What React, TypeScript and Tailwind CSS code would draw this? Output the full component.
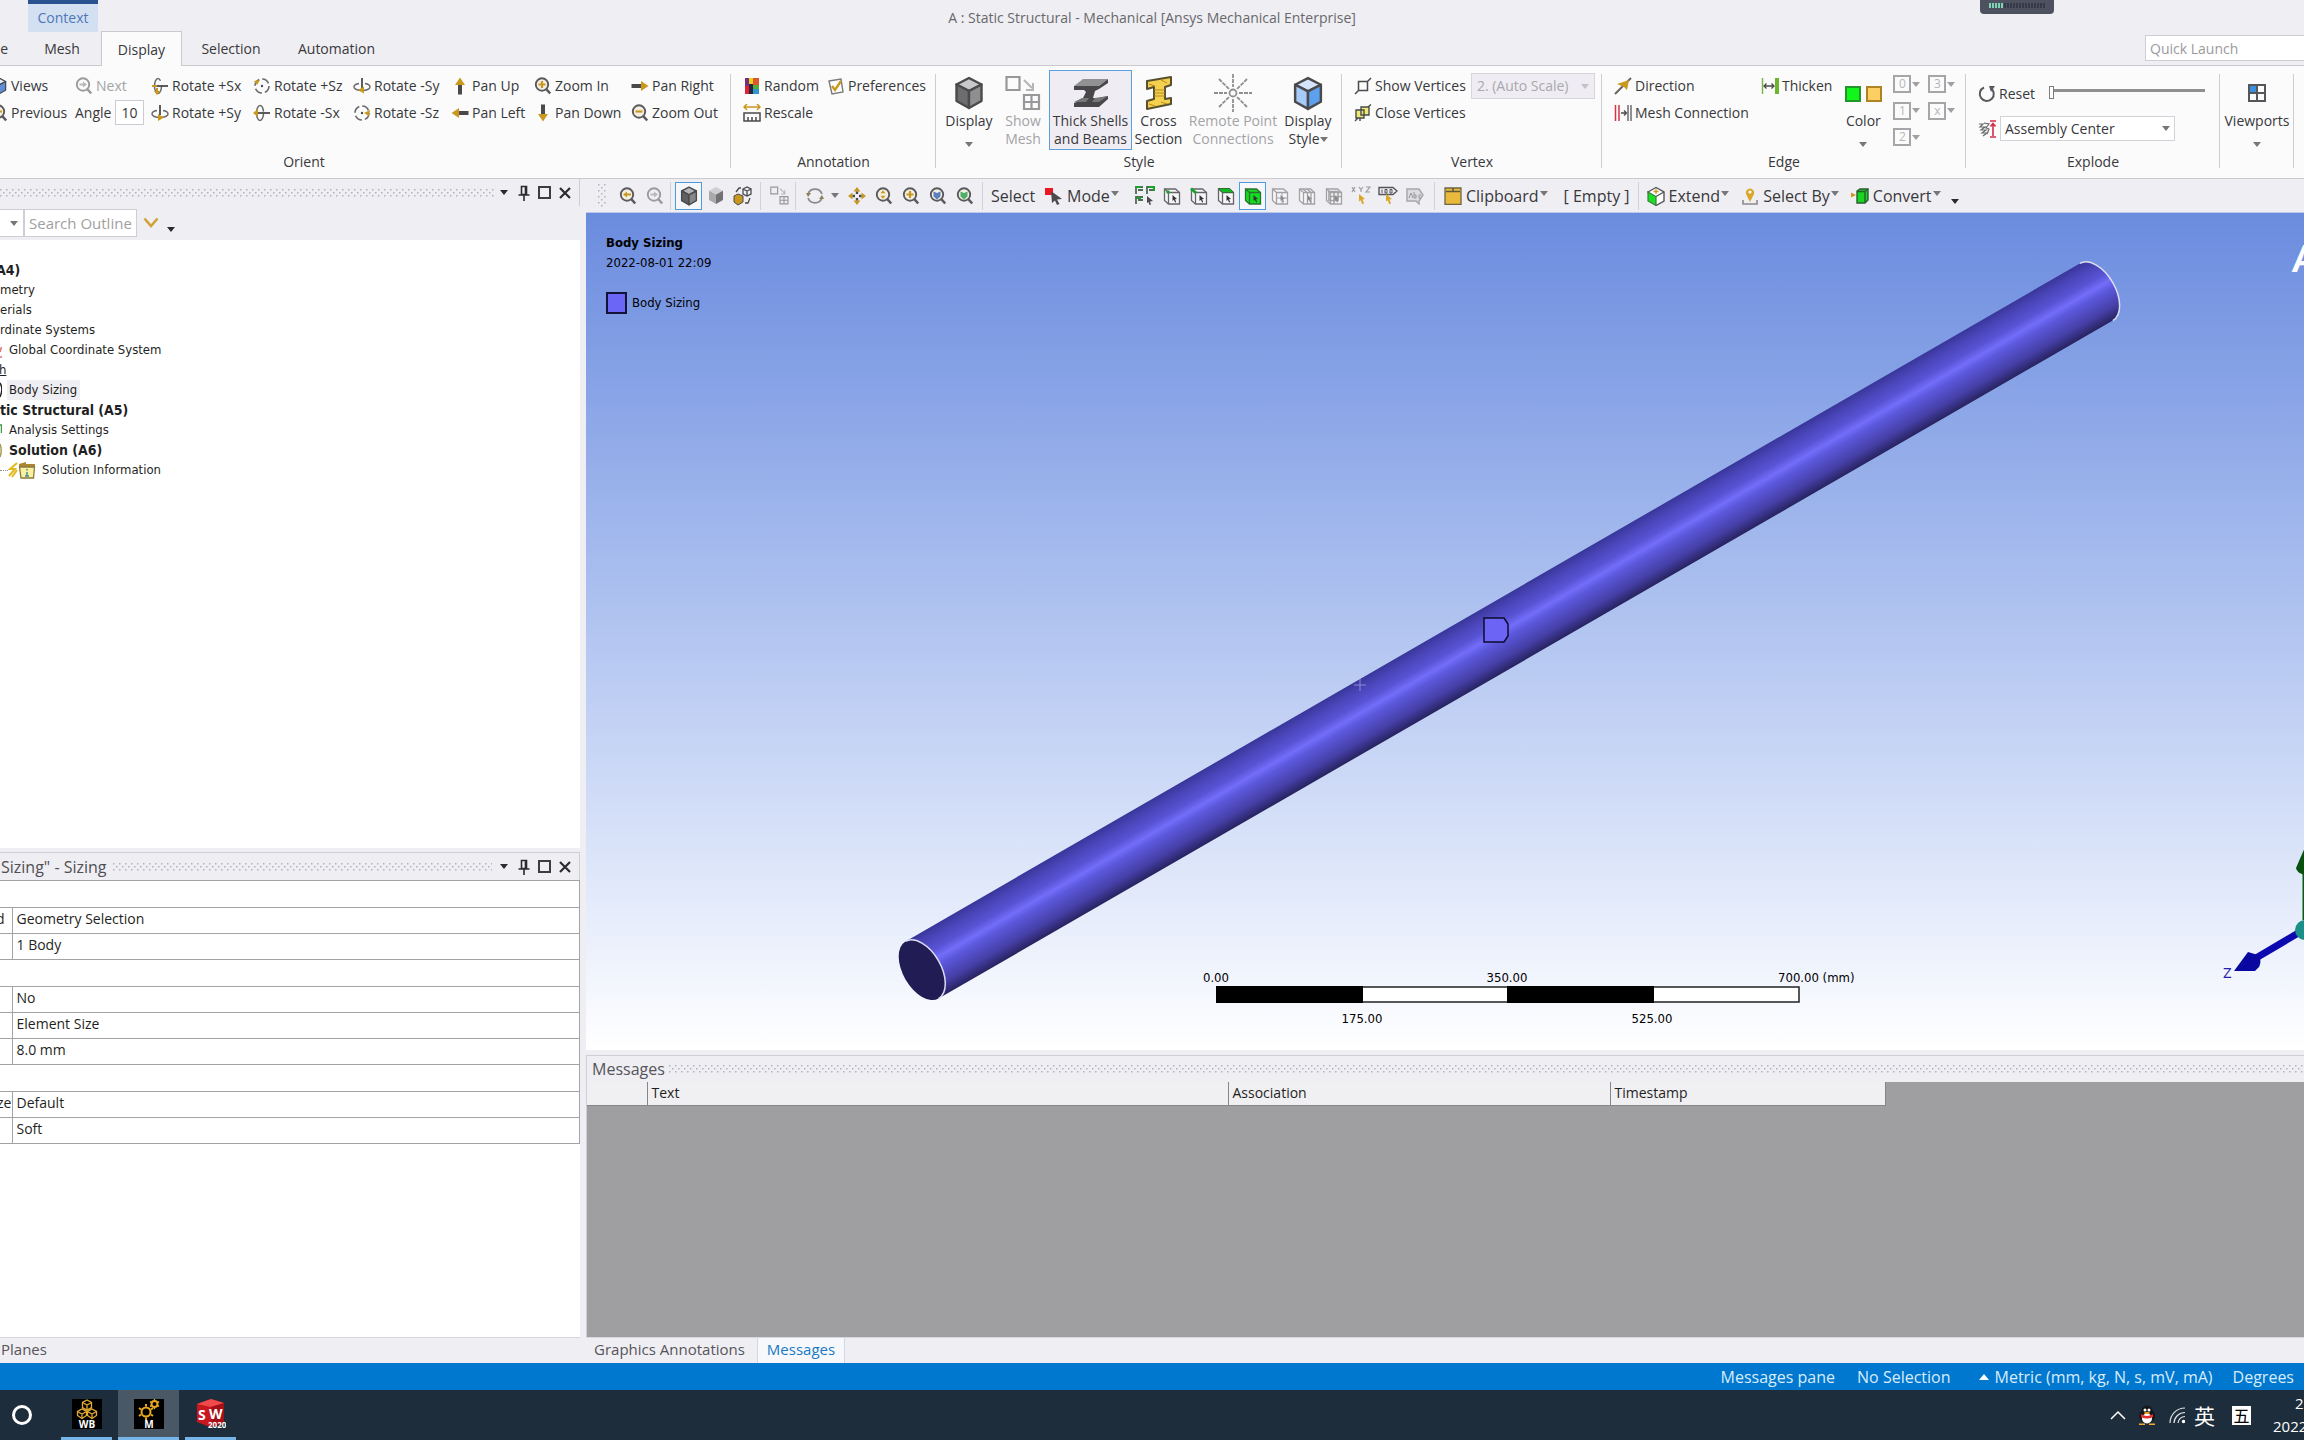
import { useState } from "react";
import type { ReactNode } from "react";
import clsx from "clsx";

const GOLD = "#c9981f";
const DARK = "#4a4a4c";

/* ---------- icons ---------- */

function Svg({ children, size = "h-[18px] w-[18px]", box = "0 0 18 18" }: { children: ReactNode; size?: string; box?: string }) {
  return (
    <svg viewBox={box} className={clsx("shrink-0", size)} fill="none" aria-hidden="true">
      {children}
    </svg>
  );
}

function Magnifier({ kind = "", off = false }: { kind?: string; off?: boolean }) {
  const ring = off ? "#9b9b9e" : "#5a5a5c";
  const mark = off ? "#b9b9bc" : GOLD;
  return (
    <Svg>
      <circle cx="8" cy="7.5" r="6.2" stroke={ring} strokeWidth="1.9" fill={off ? "none" : "#f4efe2"} />
      <path d="M12.2 12l4 4.5" stroke={ring} strokeWidth="2.6" />
      {kind === "in" && <path d="M8 4v7M4.5 7.5h7" stroke={mark} strokeWidth="2.2" />}
      {kind === "out" && <path d="M4.5 7.5h7" stroke={mark} strokeWidth="2.2" />}
      {kind === "left" && <path d="M4 7.5l4-3v2h4v2H8v2z" fill={mark} />}
      {kind === "right" && <path d="M12 7.5l-4-3v2H4.5v2H8v2z" fill={mark} />}
      {kind === "box" && <path d="M8 3.2l2.500 3h-5zM8 11.800l2.500-3h-5z" fill={mark} />}
      {kind === "fit" && <path d="M4.500 4.500l3.500 1.500 3.500-1.500v5L8 12.500 4.500 9.500z" fill="#5b80bd" />}
      {kind === "fitGreen" && <path d="M4.500 4.500l3.500 1.500 3.500-1.500v5L8 12.500 4.500 9.500z" fill="#4fae68" />}
    </Svg>
  );
}

function RotX({ flip = false }: { flip?: boolean }) {
  return (
    <Svg>
      <ellipse cx="7" cy="9" rx="3.5" ry="7.5" stroke="#6a6a6c" strokeWidth="1.5" strokeDasharray={flip ? "34 4" : "30 5"} />
      <path d="M4 9h13" stroke={DARK} strokeWidth="1.8" />
      {flip ? <path d="M0 9l5-4v8z" fill={GOLD} /> : <path d="M1 9h5M6 11v5M4 14l2 2.5 2-2.5" stroke={GOLD} strokeWidth="2" />}
    </Svg>
  );
}

function RotY({ flip = false }: { flip?: boolean }) {
  return (
    <Svg>
      <path d="M6 6.5C2.5 7 1 8.5 1 10c0 2 3.5 3.5 8 3.5s8-1.5 8-3.5c0-1.500-2-3-5-3.500" stroke="#6a6a6c" strokeWidth="1.5" />
      <path d="M9 1v10" stroke={DARK} strokeWidth="1.8" />
      <path d={flip ? "M5 13l6-3.5v7z" : "M13 13.5l-6-3.5v7z"} fill={GOLD} />
    </Svg>
  );
}

function RotZ({ flip = false }: { flip?: boolean }) {
  return (
    <Svg>
      <circle cx="9" cy="9" r="7" stroke="#6a6a6c" strokeWidth="1.6" strokeDasharray="8 3" />
      <circle cx="9" cy="9" r="1.2" fill={DARK} />
      <path d={flip ? "M17 6l-1 6-5-3z" : "M1 4l6-1-3 5z"} fill={GOLD} />
    </Svg>
  );
}

function Arrow({ dir }: { dir: "up" | "down" | "left" | "right" }) {
  const turn = { up: 0, right: 90, down: 180, left: 270 }[dir];
  return (
    <Svg>
      <g transform={`rotate(${turn} 9 9)`}>
        <path d="M7 8h4v9.5H7z" fill={DARK} />
        <path d="M9 0.5l5 7.5H4z" fill={GOLD} />
      </g>
    </Svg>
  );
}

function Cube({ top, left, right, line = "#4a4a4c", size }: { top: string; left: string; right: string; line?: string; size?: string }) {
  return (
    <Svg size={size} box="0 0 30 34">
      <g stroke={line} strokeWidth="2.4" strokeLinejoin="round">
        <path d="M15 2l12.5 6.5L15 15 2.5 8.5z" fill={top} />
        <path d="M2.5 8.5L15 15v17L2.5 25z" fill={left} />
        <path d="M27.5 8.5L15 15v17l12.5-7z" fill={right} />
      </g>
    </Svg>
  );
}

function PickBox({ mode, off = false }: { mode: string; off?: boolean }) {
  const line = off ? "#a2a2a5" : "#66666a";
  const body = mode === "body";
  return (
    <Svg>
      <path d="M1.5 2h11l4 3.5v11.500h-11l-4-3.500z" fill={body ? "#12e01e" : "#f6f5f8"} stroke={body ? "#2f6f34" : line} strokeWidth="1.3" />
      <path d="M1.5 2l4 3.5V17M5.500 5.500h11" stroke={body ? "#2f6f34" : line} strokeWidth="1.3" />
      {mode === "face" && <path d="M1.5 1.5h11l4 4h-11z" fill="#12b822" stroke="#2f6f34" />}
      {mode === "edge" && <path d="M1 1.500l5 4.500" stroke="#16a52a" strokeWidth="3" />}
      {mode === "vertex" && <circle cx="5" cy="5" r="1.8" fill="#16a52a" />}
      {mode === "node" && <path d="M11 5.5V17M5.500 11h11" stroke={line} />}
      {mode === "nodeface" && <path d="M5 2l4 3.500M9 2l4 3.500M9.500 5.500V17M13 5.500V17" stroke={line} strokeWidth="1.3" />}
      {mode === "element" && <path d="M4 4.500h9v9H4zM9 4v13M5 9.500h11" stroke={line} strokeWidth="1.6" />}
      <path d="M9.5 8l4.500 4-2 .3 1.200 2.700-1.100.5-1.200-2.700-1.400 1.200z" fill={off ? "#8a8a8c" : "#333"} />
    </Svg>
  );
}

const ShowMeshIcon = ({ size = "h-9 w-9" }: { size?: string }) => (
  <Svg size={size} box="0 0 36 36">
    <path d="M1.5 2h13v13h-13zM19 20h15v14H19zM26.5 20v14M19 27h15" stroke="#98989b" strokeWidth="2.2" />
    <path d="M19 5l8 8M28 8v7h-7" stroke="#b5b5b8" strokeWidth="2" />
  </Svg>
);

function MoveIcon() {
  return (
    <Svg>
      <path d="M9 0l3.5 4.5h-7zM9 18l3.500-4.500h-7zM0 9l4.500-3.500v7zM18 9l-4.500-3.500v7z" fill={GOLD} />
      <path d="M9 4.5v2.500M9 11v2.500M4.500 9H7M11 9h2.500" stroke={DARK} strokeWidth="2.4" />
    </Svg>
  );
}

function Caret({ className = "border-t-[#77777a]" }: { className?: string }) {
  return <span className={clsx("inline-block h-0 w-0 shrink-0 border-x-[4px] border-t-[5px] border-x-transparent", className)} />;
}

/* dotted strip in the pane captions */
function Grip({ id, className }: { id: string; className?: string }) {
  return (
    <svg className={clsx("h-2", className)} aria-hidden="true">
      <pattern id={id} width="6" height="6" patternUnits="userSpaceOnUse">
        <path d="M0 0h1.5v1.5H0zM3 3h1.5v1.5H3z" fill="#b4b2ba" />
      </pattern>
      <rect width="100%" height="100%" fill={`url(#${id})`} />
    </svg>
  );
}

/* ---------- ribbon ---------- */

function Tool({ icon, label, off }: { icon: ReactNode; label: string; off?: boolean }) {
  return (
    <button className={clsx("flex h-[27px] items-center gap-[3px] text-left", off && "text-[#a3a3a6]")} disabled={off}>
      {icon}
      {label}
    </button>
  );
}

function Group({ label, className, body, labelClass, children }: { label: string; className: string; body?: string; labelClass?: string; children: ReactNode }) {
  return (
    <section className={clsx("relative flex h-full shrink-0 flex-col pt-1", className)}>
      <div className={clsx("flex-1", body)}>{children}</div>
      <div className={clsx("h-[26px] text-center leading-5", labelClass)}>{label}</div>
      <div className="absolute top-2 right-0 h-[94px] w-px bg-[#cfcdd2]" />
    </section>
  );
}

function BigTool({ icon, lines, className, off, on, caret }: { icon: ReactNode; lines: string[]; className: string; off?: boolean; on?: boolean; caret?: boolean }) {
  return (
    <button
      disabled={off}
      className={clsx(
        "flex h-[80px] shrink-0 flex-col items-center border pt-[3px] leading-[18px]",
        className,
        off && "text-[#a3a3a6]",
        on ? "border-[#5b9fdc] bg-[#efedf3]" : "border-transparent",
      )}
    >
      <span className="flex h-[38px] items-center">{icon}</span>
      {lines.map((line, i) => (
        <span key={line} className="flex items-center">
          {line}
          {caret && i === 1 && <Caret />}
        </span>
      ))}
      {caret && lines.length === 1 && <Caret className="mt-3 border-t-[#77777a]" />}
    </button>
  );
}

function EdgeBox({ label }: { label: string }) {
  return (
    <button className="flex h-[18px] items-center gap-px text-xs text-[#b5b5b8]" disabled>
      <span className="flex h-[18px] w-[18px] items-center justify-center border-2 border-[#a6a6a9]">{label}</span>
      <Caret className="border-t-[#a0a0a3]" />
    </button>
  );
}

const ORIENT = [
  { label: "Views", icon: <Cube top="#e5eefb" left="#fff" right="#5c8fd6" size="h-[18px] w-[18px]" /> },
  { label: "Next", icon: <Magnifier kind="right" off />, off: true },
  { label: "Rotate +Sx", icon: <RotX /> },
  { label: "Rotate +Sz", icon: <RotZ /> },
  { label: "Rotate -Sy", icon: <RotY flip /> },
  { label: "Pan Up", icon: <Arrow dir="up" /> },
  { label: "Zoom In", icon: <Magnifier kind="in" /> },
  { label: "Pan Right", icon: <Arrow dir="right" /> },
  { label: "Previous", icon: <Magnifier kind="left" /> },
  { label: "Angle", icon: null },
  { label: "Rotate +Sy", icon: <RotY /> },
  { label: "Rotate -Sx", icon: <RotX flip /> },
  { label: "Rotate -Sz", icon: <RotZ flip /> },
  { label: "Pan Left", icon: <Arrow dir="left" /> },
  { label: "Pan Down", icon: <Arrow dir="down" /> },
  { label: "Zoom Out", icon: <Magnifier kind="out" /> },
];

function Ribbon() {
  const [angle, setAngle] = useState("10");
  return (
    <div className="flex h-[113px] overflow-hidden border-b border-[#cbc9ce] bg-[#fbfbfb]">
      <Group label="Orient" className="w-[731px]" body="pt-[2px]" labelClass="pr-[123px]">
        <div className="-ml-[10px] grid grid-cols-[85px_76px_102px_100px_98px_83px_97px_99px]">
          {ORIENT.map(item =>
            item.icon ? (
              <Tool key={item.label} {...item} />
            ) : (
              <div key={item.label} className="flex h-[27px] items-center gap-1">
                <label htmlFor="angle">{item.label}</label>
                <input id="angle" value={angle} onChange={e => setAngle(e.target.value)} className="h-[25px] w-[29px] border border-[#cccbd3] bg-white pl-[5px]" />
              </div>
            ),
          )}
        </div>
      </Group>

      <Group label="Annotation" className="w-[205px]" body="pt-[2px] pl-3" >
        <div className="flex gap-2">
          <Tool
            label="Random"
            icon={
              <Svg>
                <path d="M2 1h4v8H2z" fill="#7a2d7d" />
                <path d="M6 1h4v6H6z" fill="#e8d21d" />
                <path d="M10 1h6v7h-6z" fill="#e0562b" />
                <path d="M2 9h4v8H2z" fill="#e02130" />
                <path d="M6 7h4v10H6z" fill="#2a2440" />
                <path d="M10 8h6v4h-6z" fill="#4fae3d" />
                <path d="M10 12h6v5h-6z" fill="#2f97c9" />
              </Svg>
            }
          />
          <Tool
            label="Preferences"
            icon={
              <Svg>
                <path d="M2 4l12-2 2 13-11 2z" stroke="#7a7a7c" strokeWidth="1.4" fill="#fff" />
                <path d="M5 9l3 4 6-9" stroke={GOLD} strokeWidth="2.4" />
              </Svg>
            }
          />
        </div>
        <Tool
          label="Rescale"
          icon={
            <Svg>
              <path d="M1 3h16M4 0L1 3l3 3M14 0l3 3-3 3" stroke={GOLD} strokeWidth="1.5" />
              <path d="M1 9h16v8H1zM5 17v-4M9 17v-4M13 17v-4" stroke={DARK} strokeWidth="1.5" />
            </Svg>
          }
        />
      </Group>

      <Group label="Style" className="w-[406px]">
        <div className="flex pl-[5px]">
          <BigTool className="w-[56px]" lines={["Display"]} caret icon={<Cube top="#c8c8ca" left="#6d6d70" right="#8f8f92" size="h-[34px] w-[30px]" />} />
          <BigTool className="w-[52px]" lines={["Show", "Mesh"]} off icon={<ShowMeshIcon />} />
          <BigTool
            className="w-[83px]"
            lines={["Thick Shells", "and Beams"]}
            on
            icon={
              <Svg size="h-[30px] w-9" box="0 0 36 30">
                <path d="M1 8L10 1h25l-9 7z" fill="#929295" />
                <path d="M1 8h25l9-7v4l-9 6-4 2-2 7h6l9-2v3l-9 8H1v-4l8-3 4-8-2-2H1z" fill="#48484b" />
                <path d="M1 24l8-4h7l-3 4z" fill="#77777a" />
                <path d="M26 24l9-6-13 2-3 4z" fill="#77777a" />
              </Svg>
            }
          />
          <BigTool
            className="w-[53px]"
            lines={["Cross", "Section"]}
            icon={
              <Svg size="h-9 w-7" box="0 0 28 36">
                <path d="M2 6l24-4v8l-6 2v12l6-1v6L2 34v-8l7-2V12l-7 2z" fill="#f5cf4e" stroke="#57502f" strokeWidth="2" strokeLinejoin="round" />
                <path d="M9 15h11M9 18h11M9 21h11M4 9l6 2M4 29l6 2M16 5l6 3M16 27l6 2" stroke="#b58d1d" />
              </Svg>
            }
          />
          <BigTool
            className="w-[96px]"
            lines={["Remote Point", "Connections"]}
            off
            icon={
              <Svg size="h-[38px] w-[38px]" box="0 0 38 38">
                <g stroke="#8f8f92" strokeWidth="1.8">
                  <path d="M19 0v13M19 25v13M0 19h13M25 19h13" strokeDasharray="4 1" />
                  <path d="M5 5l10 10M33 5L23 15M5 33l10-10M33 33L23 23" strokeDasharray="4 1" />
                  <circle cx="19" cy="19" r="3.5" />
                </g>
              </Svg>
            }
          />
          <BigTool className="w-[54px]" lines={["Display", "Style"]} caret icon={<Cube top="#d4e4fb" left="#a6cbf8" right="#5da0ee" size="h-[35px] w-[34px]" />} />
        </div>
      </Group>

      <Group label="Vertex" className="w-[260px]" body="pt-[2px] pl-3">
        <div className="flex items-center gap-[5px]">
          <Tool
            label="Show Vertices"
            icon={
              <Svg>
                <path d="M4.5 4.5h9v9h-9zM1 17l3.500-3.500M13.500 4.500L17 1" stroke={DARK} strokeWidth="1.5" />
              </Svg>
            }
          />
          <div className="relative flex">
            <select aria-label="Vertex scale" disabled className="h-[26px] w-[124px] appearance-none border border-[#d6d5da] bg-[#efedf3] pl-[5px] text-[#a9a8ad]">
              <option>2. (Auto Scale)</option>
            </select>
            <Caret className="absolute top-[11px] right-[6px] border-t-[#c3c1c9]" />
          </div>
        </div>
        <Tool
          label="Close Vertices"
          icon={
            <Svg>
              <path d="M2 6h8v8H2zM7 3h8v8H7z" fill="#e9e23c" fillOpacity=".7" stroke={DARK} strokeWidth="1.4" />
              <path d="M1 17l3-3M6 14v3M14 3l3-2.500" stroke={DARK} strokeWidth="1.4" />
            </Svg>
          }
        />
      </Group>

      <Group label="Edge" className="w-[364px]" body="pl-3">
        <div className="flex">
          <div className="w-[147px] pt-[2px]">
            <Tool
              label="Direction"
              icon={
                <Svg>
                  <path d="M1 17L17 1" stroke="#66675c" strokeWidth="2" />
                  <path d="M15 3l-2 10-3-3-7-3z" fill={GOLD} />
                </Svg>
              }
            />
            <Tool
              label="Mesh Connection"
              icon={
                <Svg>
                  <path d="M1.5 1v16M5 1v16" stroke="#d53440" strokeWidth="1.5" />
                  <path d="M14 1v16M17 1v16" stroke="#6e6e70" strokeWidth="1.5" />
                  <path d="M7 9h5M10 6.5L12.5 9 10 11.5" stroke={DARK} strokeWidth="1.3" />
                </Svg>
              }
            />
          </div>
          <div className="pt-[2px]">
            <Tool
              label="Thicken"
              icon={
                <Svg>
                  <path d="M1.5 1v16" stroke="#79b548" strokeWidth="1.5" />
                  <path d="M16 1v16" stroke="#6cb52d" strokeWidth="4" />
                  <path d="M3 9h10M5.5 6.5L3 9l2.5 2.5M10.5 6.5L13 9l-2.5 2.5" stroke={DARK} strokeWidth="1.3" />
                </Svg>
              }
            />
          </div>
          <button className="mt-4 ml-2 flex w-[46px] flex-col items-center">
            <span className="flex gap-[5px]">
              <span className="h-4 w-4 border-2 border-[#23952b] bg-[#12f51a]" />
              <span className="h-4 w-4 border-2 border-[#ad8324] bg-[#fbcf62]" />
            </span>
            <span className="mt-[10px] leading-[18px]">Color</span>
            <Caret className="mt-3 border-t-[#77777a]" />
          </button>
          <div className="mt-[5px] ml-[7px] grid grid-cols-[35px_30px] gap-y-2">
            <EdgeBox label="0" />
            <EdgeBox label="3" />
            <EdgeBox label="1" />
            <EdgeBox label="x" />
            <EdgeBox label="2" />
          </div>
        </div>
      </Group>

      <Group label="Explode" className="w-[254px]" body="pl-3">
        <div className="flex items-start pt-[10px]">
          <Tool
            label="Reset"
            icon={
              <Svg>
                <path d="M6 2.5A7 7 0 1 0 12.5 3" stroke="#5a5a5c" strokeWidth="2" />
                <path d="M11 1h6l-4 6z" fill="#5a5a5c" />
              </Svg>
            }
          />
          <input
            type="range"
            aria-label="Explode amount"
            min={0}
            max={100}
            defaultValue={0}
            className="mt-[2px] ml-[14px] h-4 w-[156px] appearance-none bg-transparent [&::-webkit-slider-runnable-track]:h-[3px] [&::-webkit-slider-runnable-track]:bg-[#8f8f92] [&::-webkit-slider-thumb]:-mt-[3px] [&::-webkit-slider-thumb]:h-[13px] [&::-webkit-slider-thumb]:w-[5px] [&::-webkit-slider-thumb]:appearance-none [&::-webkit-slider-thumb]:border [&::-webkit-slider-thumb]:border-[#7d7d80] [&::-webkit-slider-thumb]:bg-white"
          />
        </div>
        <div className="flex items-center gap-1 pt-[9px]">
          <Svg>
            <path d="M1 4h4L2 7h5L3 10h5l-4 3h5l-4 3M6 3l5 1-3 4 3 1-2 5" stroke="#6a6a6c" strokeWidth="1.2" />
            <path d="M15 4v12M12.5 6.5L15 3.5l2.5 3M12 1h6M12 17h6" stroke="#d22f48" strokeWidth="1.6" />
          </Svg>
          <div className="relative flex">
            <select aria-label="Explode origin" className="h-[25px] w-[175px] appearance-none border border-[#d4d2d8] bg-white pl-1">
              <option>Assembly Center</option>
            </select>
            <Caret className="absolute top-[10px] right-[5px] border-t-[#77777a]" />
          </div>
        </div>
      </Group>

      <Group label="" className="w-[74px]">
        <BigTool
          className="w-full"
          lines={["Viewports"]}
          caret
          icon={
            <Svg>
              <path d="M1 1h8v8H1z" fill="#3c8fdc" />
              <path d="M1 1h16v16H1zM9 1v16M1 9h16" stroke="#55565a" strokeWidth="2" />
            </Svg>
          }
        />
      </Group>
    </div>
  );
}

function TitleAndTabs() {
  return (
    <header className="relative flex h-[66px] items-end justify-between border-b border-[#cbc9ce] bg-[#efeef3]">
      <div className="absolute inset-x-0 top-2 text-center leading-[19px] text-[#68686b]">A : Static Structural - Mechanical [Ansys Mechanical Enterprise]</div>
      <div className="absolute top-0 left-[28px] flex h-8 w-[70px] items-end justify-center border-t-4 border-[#2a5291] bg-[#d3e0f2] pb-1 text-[#4f78b8]">Context</div>
      <div className="absolute top-0 right-[250px] flex h-[14px] w-[74px] justify-center gap-px rounded-b bg-[#4d5160] pt-[3px]">
        {Array.from({ length: 19 }, (_, i) => (
          <span key={i} className={clsx("h-[5px] w-[2px]", i < 5 ? "bg-[#7ed3b4]" : "bg-[#363a48]")} />
        ))}
      </div>
      <nav className="flex h-[34px] pt-[2px]">
        <button className="w-[23px] pr-[15px] text-right">e</button>
        <button className="w-[78px]">Mesh</button>
        <button className="relative z-10 -mt-[2px] -mb-px w-[81px] border border-b-0 border-[#cbc9ce] bg-[#fbfbfb] pt-[2px]">Display</button>
        <button className="w-[98px]">Selection</button>
        <button className="w-[113px]">Automation</button>
      </nav>
      <input aria-label="Quick Launch" placeholder="Quick Launch" className="mb-1 h-[26px] w-[159px] border border-r-0 border-[#cfcdd6] bg-white pl-1 placeholder:text-[#9a9a9d]" />
    </header>
  );
}

/* ---------- left side ---------- */

function PaneButtons() {
  return (
    <div className="flex shrink-0 items-center gap-2 pr-2 text-[#2b2b2d]">
      <button aria-label="Pane menu" className="flex w-3 justify-center">
        <Caret className="border-t-[#2b2b2d]" />
      </button>
      <button aria-label="Pin">
        <Svg size="h-4 w-3" box="0 0 12 16">
          <path d="M3.5 1.5h5v8h-5zM7.5 1.5v8M0.5 10h11M6 10v6" stroke="#2b2b2d" strokeWidth="1.6" />
        </Svg>
      </button>
      <button aria-label="Maximize" className="h-[13px] w-[13px] border-2 border-[#3d3d3f]" />
      <button aria-label="Close">
        <Svg size="h-3 w-3" box="0 0 12 12">
          <path d="M1 1l10 10M11 1L1 11" stroke="#2b2b2d" strokeWidth="2.2" />
        </Svg>
      </button>
    </div>
  );
}

const TREE = [
  { text: "A4)", cls: "-ml-[4px] text-sm font-bold" },
  { text: "metry", cls: "" },
  { text: "erials", cls: "" },
  { text: "rdinate Systems", cls: "" },
  { text: "Global Coordinate System", cls: "ml-[7px]", mark: <path d="M0 11l1.5-5M0 16h2" stroke="#e0707c" strokeWidth="1.5" /> },
  { text: "h", cls: "-ml-px underline" },
  { text: "Body Sizing", cls: "ml-[5px] bg-[#efeef3] pr-[3px] pl-[2px]", mark: <path d="M0 2c2 3 2.500 8 0 14" stroke="#222" strokeWidth="1.4" /> },
  { text: "tic Structural (A5)", cls: "text-sm font-bold" },
  { text: "Analysis Settings", cls: "ml-[7px]", mark: <path d="M0 4h1.500v8" stroke="#3d9a48" strokeWidth="1.5" /> },
  { text: "Solution (A6)", cls: "ml-[7px] text-sm font-bold", mark: <path d="M0 3c1.500 4 1.500 9 0 13" stroke="#a39a52" strokeWidth="1.5" /> },
];

const DETAILS = [
  null,
  ["d", "Geometry Selection"],
  ["", "1 Body"],
  null,
  ["", "No"],
  ["", "Element Size"],
  ["", "8.0 mm"],
  null,
  ["ze", "Default"],
  ["", "Soft"],
];

function LeftSide() {
  return (
    <aside className="flex w-[580px] shrink-0 flex-col">
      <div className="flex h-[27px] items-center gap-1 border-r border-[#cfcdd6]">
        <Grip id="grip-outline" className="min-w-0 flex-1" />
        <PaneButtons />
      </div>
      <div className="flex h-[34px] shrink-0 items-center">
        <div className="flex h-[28px] w-6 items-center justify-center border border-l-0 border-[#cfcdd6] bg-white pl-1">
          <Caret />
        </div>
        <input aria-label="Search Outline" placeholder="Search Outline" className="h-[28px] w-[113px] border border-[#cfcdd6] bg-white pl-1 text-[15px] placeholder:text-[#9f9fa2]" />
        <button aria-label="Expand" className="ml-[6px]">
          <Svg size="h-3 w-4" box="0 0 16 12">
            <path d="M1.5 1.5L8 9l6.5-7.500" stroke="#d0a136" strokeWidth="2.5" />
          </Svg>
        </button>
        <Caret className="mt-3 ml-2 border-t-[#2b2b2d]" />
      </div>
      <div className="flex-1 overflow-hidden bg-white pt-5 font-['DejaVu_Sans_Condensed','DejaVu_Sans',sans-serif] text-[13px] text-[#1f1f23] [font-stretch:condensed]">
        {TREE.map(row => (
          <div key={row.text} className="flex h-5 items-center">
            {row.mark && <Svg size="h-[18px] w-[2px]" box="0 0 2 18">{row.mark}</Svg>}
            <span className={clsx("leading-5", row.cls)}>{row.text}</span>
          </div>
        ))}
        <div className="flex h-5 items-center">
          <span className="w-2 border-t border-dotted border-[#8b8b8e]" />
          <Svg size="h-4 w-[10px]" box="0 0 10 16">
            <path d="M9 1L2 7h5L1 14M9 8l-5 7" stroke="#e2b91d" strokeWidth="2" />
          </Svg>
          <Svg>
            <path d="M1 3l7-2v2h9v3H1z" fill="#a98733" />
            <path d="M1.5 6h15l-1 11H3z" fill="#fbf0a0" stroke="#8a7c3e" strokeWidth="1.3" />
            <path d="M9 8v1.5M9 11v4M7 15h4" stroke="#3f8f97" strokeWidth="1.5" />
          </Svg>
          <span className="ml-[6px]">Solution Information</span>
        </div>
      </div>

      <div className="mt-1 flex h-[485px] shrink-0 flex-col border-t border-[#cfcdd6]">
        <div className="flex h-[27px] shrink-0 items-center gap-[6px] border-r border-[#cfcdd6] pl-px text-[#4f4f54]">
          <span className="text-base">Sizing" - Sizing</span>
          <Grip id="grip-details" className="min-w-0 flex-1" />
          <PaneButtons />
        </div>
        <div className="flex-1 bg-white text-sm text-[#1f1f23]">
          <table className="w-full table-fixed border-collapse">
            <colgroup>
              <col className="w-[12px]" />
              <col />
            </colgroup>
            <tbody>
              {DETAILS.map((row, i) =>
                row ? (
                  <tr key={i} className="h-[26px] leading-5">
                    <td className="border border-l-0 border-[#a3a3a6] p-0 pb-[3px]">
                      <span className={row[0] === "ze" ? "-ml-[3px]" : "-ml-1"}>{row[0]}</span>
                    </td>
                    <td className="border border-[#a3a3a6] p-0 pb-[3px] pl-[4px]">{row[1]}</td>
                  </tr>
                ) : (
                  <tr key={i} className="h-[27px]">
                    <td colSpan={2} className="border border-l-0 border-[#a3a3a6]" />
                  </tr>
                ),
              )}
            </tbody>
          </table>
        </div>
      </div>
      <div className="flex h-[26px] shrink-0 items-center border-t border-[#d8d6dc] pb-px pl-px text-[15px] text-[#55555a]">Planes</div>
    </aside>
  );
}

/* ---------- graphics area ---------- */

function Divider({ className }: { className?: string }) {
  return <span className={clsx("h-7 w-px shrink-0 bg-[#d3d1d8]", className)} />;
}

function IconButton({ label, on, className, onClick, children }: { label: string; on?: boolean; className?: string; onClick?: () => void; children: ReactNode }) {
  return (
    <button
      aria-label={label}
      onClick={onClick}
      className={clsx("flex h-[28px] w-[27px] shrink-0 items-center justify-center border", on ? "border-[#4d9bdc] bg-[#f5f7fb]" : "border-transparent", className)}
    >
      {children}
    </button>
  );
}

function DropButton({ icon, label, className }: { icon: ReactNode; label: string; className: string }) {
  return (
    <button className={clsx("flex shrink-0 items-center gap-1", className)}>
      {icon}
      <span>{label}</span>
      <Caret className="-mt-1 -ml-[3px] border-t-[#77777a]" />
    </button>
  );
}

function GraphicsToolbar() {
  const [pick, setPick] = useState("body");
  return (
    <div className="flex h-[34px] shrink-0 items-center overflow-hidden border-b border-[#bdc9ea] text-base">
      <svg className="ml-3 h-6 w-2 shrink-0" aria-hidden="true">
        <rect width="8" height="24" fill="url(#grip-outline)" />
      </svg>
      <IconButton label="Previous view" className="ml-2"><Magnifier kind="left" /></IconButton>
      <IconButton label="Next view"><Magnifier kind="right" off /></IconButton>
      <Divider className="ml-[2px]" />
      <IconButton label="Shaded with edges" on className="ml-1"><Cube top="#b5b5b8" left="#606063" right="#87878a" size="h-[20px] w-[18px]" /></IconButton>
      <IconButton label="Shaded"><Cube top="#d0d0d3" left="#a9a9ac" right="#727275" line="none" size="h-[19px] w-[18px]" /></IconButton>
      <IconButton label="Wireframe">
        <Svg size="h-5 w-5" box="0 0 20 20">
          <path d="M1 10l4-2 5 2v6l-5 3-4-3z" fill={GOLD} stroke="#4a4a4c" />
          <path d="M10 3l4-2 4 2v5l-4 2-4-2zM10 3l4 2 4-2M14 5v5" stroke="#4a4a4c" strokeWidth="1.3" />
          <path d="M3 6l3-4h2M17 12l-2 5h-3" stroke="#4a4a4c" strokeWidth="1.3" />
        </Svg>
      </IconButton>
      <Divider className="ml-1" />
      <IconButton label="Show mesh" className="ml-[5px]"><ShowMeshIcon size="h-[19px] w-[19px]" /></IconButton>
      <Divider className="ml-[2px]" />
      <IconButton label="Rotate" className="ml-[5px]">
        <Svg>
          <path d="M2 7A7.5 7.5 0 0 1 16 7M16 11A7.5 7.5 0 0 1 2 11" stroke="#8a8a8c" strokeWidth="1.8" />
          <path d="M0 6h5l-3 4zM18 12h-5l3-4z" fill="#8c8258" />
        </Svg>
      </IconButton>
      <Caret className="ml-[3px] border-t-[#77777a]" />
      <IconButton label="Pan" className="ml-1"><MoveIcon /></IconButton>
      <IconButton label="Zoom"><Magnifier kind="box" /></IconButton>
      <IconButton label="Box zoom"><Magnifier kind="in" /></IconButton>
      <IconButton label="Fit"><Magnifier kind="fit" /></IconButton>
      <IconButton label="Fit selection"><Magnifier kind="fitGreen" /></IconButton>
      <Divider className="ml-1" />
      <span className="ml-2 w-[54px] shrink-0">Select</span>
      <DropButton
        className="w-[86px]"
        label="Mode"
        icon={
          <Svg>
            <path d="M0 1h8v7H0z" fill="#ee1620" />
            <path d="M6 4l11 8-5 .5 2.5 4.5-2.500 1-2-4.500L7 16z" fill="#4b4b4d" />
          </Svg>
        }
      />
      <IconButton label="Smart select">
        <Svg size="h-5 w-5" box="0 0 20 20">
          <path d="M1 8V1h7M3 4h5M12 8V1h7M14 4h5M1 18v-7h7M3 14h5" stroke="#4f6b54" strokeWidth="1.8" />
          <path d="M1 1h5M14 1h5v4M2 12h4" stroke="#16a52a" strokeWidth="2.2" />
          <path d="M12 10l6 5-3 .5 1 3-1.5.5-1-3-1.500 1z" fill="#4b4b4d" />
        </Svg>
      </IconButton>
      {["vertex", "edge", "face", "body"].map(mode => (
        <IconButton key={mode} label={mode} on={pick === mode} onClick={() => setPick(mode)}>
          <PickBox mode={mode} />
        </IconButton>
      ))}
      <IconButton label="Node"><PickBox mode="node" off /></IconButton>
      <IconButton label="Element face"><PickBox mode="nodeface" off /></IconButton>
      <IconButton label="Element"><PickBox mode="element" off /></IconButton>
      <IconButton label="Coordinates">
        <Svg size="h-5 w-5" box="0 0 20 20">
          <path d="M1 1l3 5M4 1L1 6M8 1l2 2.5L12 1M10 3.5V6M15 1h4l-4 5h4" stroke="#9a9a9d" strokeWidth="1.1" />
          <path d="M8 8l6 5-2.500.5 1.500 4-1.800.7-1.500-4L8 15.500z" fill="#dba72a" />
        </Svg>
      </IconButton>
      <IconButton label="Probe">
        <Svg size="h-5 w-5" box="0 0 20 20">
          <path d="M1 1.5h14l4 3.500-4 3.500H1z" stroke="#555558" strokeWidth="1.4" />
          <path d="M4 3.5v3.500M7 3.500h2V7H7zM12 3.500h2V7h-2z" stroke="#555558" />
          <path d="M8 8l6 5-2.500.5 1.500 4-1.800.7-1.500-4L8 15.500z" fill="#dba72a" />
        </Svg>
      </IconButton>
      <IconButton label="Label">
        <Svg>
          <path d="M1 2h12l4 6-4 6v3l-3-3H1z" fill="#dcdbe0" stroke="#a6a6a9" strokeWidth="1.4" />
          <path d="M3 11l2-5 2 5M8 5v6h2V8H8M15 8h-2v3h2" stroke="#9a9a9d" />
        </Svg>
      </IconButton>
      <Divider className="ml-[6px]" />
      <DropButton
        className="ml-[9px]"
        label="Clipboard"
        icon={
          <Svg>
            <path d="M1 1h16v16.5H1z" fill="#e9b93c" stroke="#6d6545" strokeWidth="1.3" />
            <path d="M2 4.5h14M9 1v4" stroke="#5f5840" strokeWidth="1.6" />
          </Svg>
        }
      />
      <span className="ml-4 shrink-0">[ Empty ]</span>
      <Divider className="ml-2" />
      <DropButton
        className="ml-2"
        label="Extend"
        icon={
          <Svg size="h-5 w-[18px]" box="0 0 18 20">
            <path d="M1 6l8-4.500L17 6v9l-8 4.500z" fill="#fff" stroke="#55555a" strokeWidth="1.4" />
            <path d="M17 6l-8 4.500" stroke="#55555a" strokeWidth="1.4" />
            <path d="M1 6l8 4.500v9L1 15z" fill="#17e122" stroke="#3d7a40" strokeWidth="1.2" />
            <path d="M9 3v5M6.500 5.500h5" stroke={GOLD} strokeWidth="1.3" />
          </Svg>
        }
      />
      <DropButton
        className="ml-3"
        label="Select By"
        icon={
          <Svg>
            <path d="M2 13v4h14v-4" stroke="#8a8a8e" strokeWidth="1.6" />
            <path d="M9 15L5 7a4.2 4.2 0 1 1 8 0z" fill="#dba72a" />
            <circle cx="9" cy="5" r="1.6" fill="#fff" />
          </Svg>
        }
      />
      <DropButton
        className="ml-3"
        label="Convert"
        icon={
          <Svg>
            <path d="M6 4l3-2h8v11l-3 3H6z" fill="#17d622" stroke="#2d5c30" strokeWidth="1.4" />
            <path d="M6 4.5h8V16M14 4.500L17 2" stroke="#2d5c30" strokeWidth="1.4" />
            <path d="M5 8L0 5.5v5z" fill={GOLD} />
          </Svg>
        }
      />
      <Caret className="mt-3 ml-[10px] border-t-[#2b2b2d]" />
    </div>
  );
}

function Scene() {
  return (
    <div className="relative min-h-0 flex-1 overflow-hidden bg-linear-to-b from-[#6b8bde] to-white font-['DejaVu_Sans_Condensed','DejaVu_Sans',sans-serif] text-[13px] text-black [font-stretch:condensed]">
      <svg viewBox="0 0 1718 837" preserveAspectRatio="xMidYMid meet" className="h-full w-full" role="img" aria-label="Meshed tube body">
        <defs>
          <linearGradient id="tube" x1="0" y1="0" x2="0" y2="1">
            <stop offset="0" stopColor="#38369a" />
            <stop offset=".12" stopColor="#4843b4" />
            <stop offset=".32" stopColor="#5853d4" />
            <stop offset=".45" stopColor="#736dfa" />
            <stop offset=".56" stopColor="#5c58dc" />
            <stop offset=".82" stopColor="#453fa6" />
            <stop offset="1" stopColor="#27235f" />
          </linearGradient>
        </defs>
        <g transform="translate(336 757) rotate(-30)">
          <path d="M0-33H1356A19 33 0 0 1 1356 33H0z" fill="url(#tube)" />
          <path d="M1356-33A19 33 0 0 1 1356 33" stroke="#dcdcf5" strokeWidth="1.5" fill="none" />
          <ellipse rx="19" ry="33" fill="#211d54" />
          <path d="M0-33A19 33 0 0 1 0 33" stroke="#dcdcf5" strokeWidth="1.5" fill="none" />
        </g>
        <path d="M898 405h20l4 6v12l-4 6h-20z" fill="#6b64f5" stroke="#0d0b2c" strokeWidth="1.5" />
        <path d="M774 466v12M768 472h12" stroke="#8d8bd8" />
        {/* scale ruler */}
        <path d="M631 774h582v15H631z" fill="#fff" stroke="#222" strokeWidth="1.5" />
        <path d="M630 773h147v17H630zM921 773h147v17H921z" fill="#000" />
        <g fontSize="13" fill="#000" textAnchor="middle">
          <text x="630" y="769">0.00</text>
          <text x="921" y="769">350.00</text>
          <text x="1192" y="769" textAnchor="start">700.00 (mm)</text>
          <text x="776" y="810">175.00</text>
          <text x="1066" y="810">525.00</text>
        </g>
        {/* triad */}
        <path d="M1718 707V655" stroke="#0b5a12" strokeWidth="3" />
        <path d="M1720 632l-10 23c1 4 4 6 10 7z" fill="#07500d" />
        <path d="M1714 719l-44 26" stroke="#0a0ab0" strokeWidth="7" />
        <path d="M1648 758l14-19 10 3c3 3 3 8 1 12l-4 4z" fill="#0808a0" />
        <circle cx="1719" cy="717" r="10" fill="#1a8f8a" />
        <text x="1637" y="765" fontSize="14" fill="#2a1fa8">Z</text>
        <text x="1708" y="59" fontSize="38" fontWeight="bold" fontStyle="italic" fill="#fff" fontFamily="Open Sans">A</text>
      </svg>
      <div className="absolute top-[20px] left-5 leading-5">
        <div className="font-bold">Body Sizing</div>
        <div>2022-08-01 22:09</div>
        <div className="mt-[19px] flex h-[22px] items-center gap-[5px]">
          <span className="h-[22px] w-[21px] border-2 border-[#141235] bg-[#6b66f6]" />
          Body Sizing
        </div>
      </div>
    </div>
  );
}

function Messages() {
  return (
    <div className="mt-[5px] flex h-[282px] shrink-0 flex-col border-t border-l border-[#cfcdd6]">
      <div className="flex h-[26px] shrink-0 items-center gap-1 pl-[5px] text-base text-[#55555a]">
        Messages
        <Grip id="grip-messages" className="min-w-0 flex-1" />
      </div>
      <div className="flex-1 bg-[#9f9fa2]">
        <table className="w-[1299px] table-fixed border-collapse text-left text-sm text-[#1f1f23]">
          <thead>
            <tr className="h-[23px] bg-[#f0eff2] leading-5">
              <th aria-label="Severity" className="w-[60px] border-r border-b border-[#85858a] p-0" />
              <th className="w-[581px] border-r border-b border-[#85858a] p-0 pl-1 font-normal">Text</th>
              <th className="w-[382px] border-r border-b border-[#85858a] p-0 pl-1 font-normal">Association</th>
              <th className="border-r border-b border-[#85858a] p-0 pl-1 font-normal">Timestamp</th>
            </tr>
          </thead>
        </table>
      </div>
    </div>
  );
}

/* ---------- bottom bars ---------- */

function StatusBar() {
  return (
    <footer className="flex h-[27px] shrink-0 items-center justify-end bg-[#0078cf] pt-px pr-[10px] text-base text-[#d9ecfb]">
      <span>Messages pane</span>
      <span className="ml-[22px]">No Selection</span>
      <span className="mr-[6px] ml-[28px] h-0 w-0 border-x-[5px] border-b-[6px] border-x-transparent border-b-white" />
      <span>Metric (mm, kg, N, s, mV, mA)</span>
      <span className="ml-[20px]">Degrees</span>
    </footer>
  );
}

const GEAR = "M0-5.5V-8M0 5.5V8M-5 -2.5L-7-4M5 2.5L7 4M-5 2.5L-7 4M5-2.5L7-4";

function TaskBar() {
  return (
    <div className="flex h-[50px] shrink-0 items-center justify-between overflow-hidden bg-[#1d2d3b] text-white">
      <div className="flex h-full items-stretch">
        <button aria-label="Search" className="flex w-[61px] items-center pl-3">
          <span className="h-5 w-5 rounded-full border-[3px] border-white" />
        </button>
        <button aria-label="Workbench" className="flex w-[51px] items-center justify-center border-b-[3px] border-[#76b5ea]">
          <Svg size="h-[30px] w-[30px]" box="0 0 30 30">
            <path d="M0 0h30v30H0z" fill="#000" />
            <g stroke="#e3ab32" strokeWidth="1.3">
              <path d="M15 1l4.5 2.5v5L15 11l-4.5-2.500v-5zM10 10l4.500 2.500v4L10 19.500l-4.500-3v-4zM20 10l4.500 2.500v4L20 19.500l-4.500-3v-4z" />
              <path d="M10.5 3.5L15 6l4.5-2.500M15 6v5M5.500 12.500L10 15l4.500-2.500M10 15v4M15.500 12.500L20 15l4.500-2.500M20 15v4" />
            </g>
            <text x="15" y="29" fontSize="10" fontWeight="bold" textAnchor="middle" fill="#fff">WB</text>
          </Svg>
        </button>
        <button aria-label="Mechanical" className="ml-[6px] flex w-[61px] items-center justify-center border-b-[3px] border-[#76b5ea] bg-[#4a5764]">
          <Svg size="h-[30px] w-[30px]" box="0 0 30 30">
            <path d="M0 0h30v30H0z" fill="#000" />
            <g stroke="#e8a91f" strokeWidth="2">
              <circle cx="12" cy="13" r="4.5" />
              <path d={GEAR} transform="translate(12 13)" />
              <circle cx="20.5" cy="5" r="3" />
              <path d={GEAR} transform="translate(20.5 5) scale(.65)" />
            </g>
            <text x="15" y="29" fontSize="10" fontWeight="bold" textAnchor="middle" fill="#fff">M</text>
          </Svg>
        </button>
        <button aria-label="SolidWorks 2020" className="ml-[6px] flex w-[51px] items-center justify-center border-b-[3px] border-[#76b5ea]">
          <Svg size="h-[30px] w-[30px]" box="0 0 30 30">
            <path d="M1 5L15 0l13 4v20l-14 4L1 23z" fill="#c8171f" />
            <path d="M1 5L15 0l13 4-13 4z" fill="#ee4a4a" />
            <path d="M15 8l13-4v20l-13 4z" fill="#a50f17" />
            <text x="2" y="21" fontSize="14" fontWeight="bold" fill="#fff">S</text>
            <text x="13" y="20" fontSize="14" fontWeight="bold" fill="#fff">W</text>
            <text x="12" y="29" fontSize="8" fontWeight="bold" fill="#fff">2020</text>
          </Svg>
        </button>
      </div>
      <div className="flex items-center">
        <Svg size="h-[10px] w-4" box="0 0 16 10">
          <path d="M1 9l7-7 7 7" stroke="#fff" strokeWidth="1.5" />
        </Svg>
        <Svg size="ml-[11px] h-5 w-5" box="0 0 20 20">
          <ellipse cx="10" cy="11" rx="8" ry="7" fill="#15161a" />
          <ellipse cx="10" cy="6.5" rx="5.5" ry="6" fill="#15161a" />
          <ellipse cx="10" cy="13.5" rx="5" ry="5" fill="#fff" />
          <path d="M4 9c4 2.5 8 2.5 12 0v3c-4 2-8 2-12 0z" fill="#e52b2b" />
          <circle cx="8" cy="5" r="1.5" fill="#fff" />
          <circle cx="12" cy="5" r="1.5" fill="#fff" />
          <ellipse cx="10" cy="8" rx="3" ry="1" fill="#f2ab26" />
          <path d="M2 19.5h6M12 19.5h6" stroke="#f2ab26" strokeWidth="2" />
        </Svg>
        <Svg size="ml-3 h-[18px] w-4" box="0 0 16 18">
          <path d="M1 17A15 15 0 0 1 16 2M5 17A11 11 0 0 1 16 6.5M9 17a7 7 0 0 1 7-6.5" stroke="#dfe4e8" strokeWidth="1.2" />
          <circle cx="14.5" cy="15.5" r="1.7" fill="#fff" />
        </Svg>
        <span className="ml-[9px] font-['Noto_Sans_CJK_SC',sans-serif] text-[21px] leading-6">英</span>
        <span className="ml-[17px] flex h-[19px] w-[19px] items-center justify-center bg-white font-['Noto_Sans_CJK_SC',sans-serif] text-base leading-none text-black">五</span>
        <time className="ml-[22px] flex w-[31px] flex-col text-[15px] leading-[23px]">
          <span className="pl-[22px]">2</span>
          <span>2022</span>
        </time>
      </div>
    </div>
  );
}

export default function App() {
  return (
    <div className="flex h-screen flex-col overflow-hidden bg-[#efeef3] font-['Open_Sans','Noto_Sans',sans-serif] text-sm whitespace-nowrap text-[#38383b]">
      <TitleAndTabs />
      <Ribbon />
      <main className="flex min-h-0 flex-1 gap-[6px]">
        <LeftSide />
        <div className="flex min-w-0 flex-1 flex-col">
          <GraphicsToolbar />
          <Scene />
          <Messages />
          <div className="flex h-[26px] shrink-0 items-stretch border-t border-[#d8d6dc] text-[15px] text-[#55555a]">
            <button className="w-[171px] pr-1 pb-px">Graphics Annotations</button>
            <button className="w-[88px] border-x border-[#d3d8e2] bg-[#f7f8fb] pb-px text-[#1879c4]">Messages</button>
          </div>
        </div>
      </main>
      <StatusBar />
      <TaskBar />
    </div>
  );
}
